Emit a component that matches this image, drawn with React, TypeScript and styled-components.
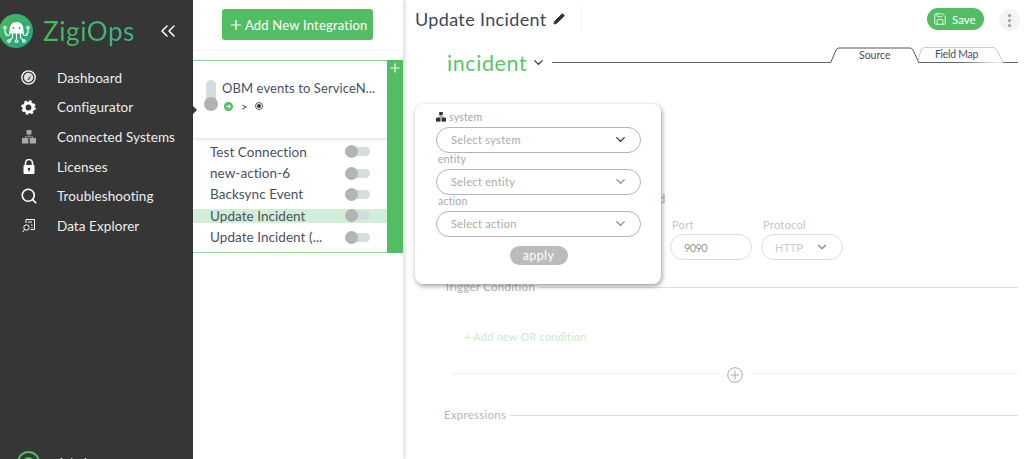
import React from 'react';
import styled, { createGlobalStyle } from 'styled-components';
import { ChevronDown, ChevronsLeft, Pencil, Plus, Save, Search } from 'lucide-react';

const GREEN = '#52bd63';
const FONT = '"Lato", "Noto Sans", sans-serif';

const GlobalStyle = createGlobalStyle`
  html, body {
    margin: 0;
    padding: 0;
    height: 459px;
    overflow: hidden;
    background: #fff;
    font-family: ${FONT};
  }
  * { box-sizing: border-box; }
`;

const Page = styled.div`
  display: flex;
  width: 1024px;
  height: 459px;
  overflow: hidden;
`;

/* sidebar */
const Sidebar = styled.aside`
  position: relative;
  width: 193px;
  height: 459px;
  flex: none;
  background: #363636;
  overflow: hidden;
`;
const Brand = styled.div`
  display: flex;
  align-items: center;
  height: 34px;
  margin-top: 14px;
`;
const BrandName = styled.span`
  margin-left: 10px;
  font-size: 26px;
  letter-spacing: 0.6px;
  font-weight: 400;
  background: linear-gradient(90deg, #4cb85a, #3cb58a);
  -webkit-background-clip: text;
  background-clip: text;
  color: transparent;
`;
const Collapse = styled.span`
  display: flex;
  margin-left: 21px;
  color: #fff;
`;
const Nav = styled.nav`
  display: flex;
  flex-direction: column;
  margin-top: 15px;
`;
const NavItem = styled.div`
  display: flex;
  align-items: center;
  height: 29.6px;
  color: #eee;
  font-size: 13.5px;
  letter-spacing: 0.08px;
`;
const NavIcon = styled.span`
  display: flex;
  justify-content: center;
  width: 57px;
  color: #fff;
`;
const UserRow = styled.div`
  position: absolute;
  left: 17px;
  top: 451px;
  display: flex;
  align-items: flex-start;
  gap: 17px;
  color: #ddd;
  font-size: 13px;
`;
const UserRing = styled.span`
  display: flex;
  justify-content: center;
  padding-top: 4px;
  width: 23px;
  height: 23px;
  border-radius: 50%;
  border: 2px solid ${GREEN};
  &::after {
    content: '';
    width: 11px;
    height: 11px;
    border-radius: 50%;
    background: ${GREEN};
  }
`;
const UserName = styled.span`
  margin-top: 4px;
`;

/* integrations list */
const ListPanel = styled.section`
  position: relative;
  width: 210px;
  height: 459px;
  flex: none;
  background: #fff;
  box-shadow: 2px 0 4px rgba(0, 0, 0, 0.14);
  z-index: 1;
`;
const ButtonBar = styled.div`
  display: flex;
  height: 51px;
  padding: 9px 0 0 29px;
  border-bottom: 1px solid #f4f4f4;
`;
const AddButton = styled.button`
  display: flex;
  align-items: center;
  gap: 1px;
  width: 151px;
  height: 31px;
  padding: 0 0 0 6px;
  border: 0;
  border-radius: 3px;
  background: ${GREEN};
  color: #fff;
  font: 13px ${FONT};
  letter-spacing: 0.2px;
  white-space: nowrap;
  svg { flex: none; }
`;
const Integration = styled.div`
  display: flex;
  height: 193px;
  margin-top: 9px;
  border-top: 1px solid #8fd49a;
  border-bottom: 1px solid #8fd49a;
`;
const IntegrationBody = styled.div`
  width: 194px;
  flex: none;
`;
const PlusRail = styled.div`
  flex: 1;
  display: flex;
  justify-content: center;
  align-items: flex-start;
  padding-top: 1px;
  margin: -1px 0;
  background: ${GREEN};
  color: #fff;
`;
const IntegrationHead = styled.div`
  display: flex;
  height: 77px;
  padding: 18px 0 0 13px;
  background: #fff;
  box-shadow: 0 1px 4px rgba(0, 0, 0, 0.16);
`;
const VerticalToggle = styled.span`
  position: relative;
  display: block;
  width: 10px;
  height: 30px;
  margin-top: 1px;
  flex: none;
  border-radius: 5px;
  background: #d5dcdc;
  &::after {
    content: '';
    position: absolute;
    left: -2px;
    bottom: -1px;
    width: 14px;
    height: 14px;
    border-radius: 50%;
    background: #b3b3b3;
  }
`;
const HeadText = styled.div`
  margin-left: 6px;
  min-width: 0;
`;
const IntegrationTitle = styled.div`
  font-size: 13px;
  line-height: 18px;
  color: #4a5260;
  letter-spacing: 0.1px;
  white-space: nowrap;
`;
const Flow = styled.div`
  display: flex;
  align-items: center;
  gap: 8px;
  margin: 2px 0 0 2px;
  color: #444;
  font-size: 11px;
  height: 14px;
`;
const Actions = styled.ul`
  list-style: none;
  margin: 0;
  padding: 3px 0 0;
`;
const ActionRow = styled.li<{ $active?: boolean }>`
  display: flex;
  align-items: center;
  justify-content: space-between;
  height: 21.35px;
  padding: 0 17px;
  font-size: 13.5px;
  letter-spacing: 0.05px;
  color: #4a5260;
  background: linear-gradient(
    ${(p) => (p.$active ? '#d3eed8, #d3eed8' : '#fff, #fff')}
  ) center / 100% 14px no-repeat;
`;
const Toggle = styled.span`
  position: relative;
  display: block;
  width: 25px;
  height: 9px;
  border-radius: 5px;
  background: #d5dcdc;
  &::before {
    content: '';
    position: absolute;
    left: 0;
    top: -2px;
    width: 13px;
    height: 13px;
    border-radius: 50%;
    background: #b3b3b3;
  }
`;
const Notch = styled.span`
  position: absolute;
  left: 0;
  top: 106px;
  border-left: 4px solid #363636;
  border-top: 4px solid transparent;
  border-bottom: 4px solid transparent;
`;

/* main area */
const Main = styled.main`
  position: relative;
  flex: 1;
  height: 459px;
  overflow: hidden;
  background: #fff;
`;
const TitleBar = styled.header`
  display: flex;
  align-items: center;
  height: 38px;
  padding: 0 4px 0 12px;
`;
const PageTitle = styled.h1`
  display: flex;
  align-items: center;
  gap: 6px;
  width: 167px;
  height: 26px;
  margin: 0;
  border-right: 1px solid #f6f6f6;
  font-size: 18px;
  font-weight: 400;
  letter-spacing: 0.35px;
  color: #3f4757;
`;
const SaveButton = styled.button`
  display: flex;
  align-items: center;
  gap: 5px;
  width: 57px;
  height: 22px;
  margin-left: auto;
  padding: 0 0 0 6px;
  border: 0;
  border-radius: 11px;
  background: ${GREEN};
  color: #fff;
  font: 11.5px ${FONT};
`;
const Kebab = styled.span`
  display: flex;
  flex-direction: column;
  align-items: center;
  justify-content: center;
  gap: 2px;
  width: 21px;
  height: 22px;
  margin: 2px 0 0 15px;
  border-radius: 50%;
  background: #f3f3f3;
  i {
    width: 3px;
    height: 3px;
    border-radius: 50%;
    background: #999;
  }
`;
const EntityRow = styled.div`
  display: flex;
  align-items: flex-start;
  height: 36px;
  margin-top: -1px;
  padding: 0 6px 0 44px;
`;
const EntityName = styled.span`
  margin: 13px 4px 0 0;
  font-size: 21.5px;
  line-height: 26px;
  letter-spacing: 0.6px;
  color: #5cc46b;
`;
const EntityChevron = styled.span`
  display: flex;
  margin-top: 18px;
  color: #333;
`;
const EntityLine = styled.span`
  flex: 1;
  height: 1px;
  margin: 25px 0 0 6px;
  background: #666;
`;
const Tabs = styled.div`
  display: flex;
  width: 188px;
  height: 16px;
  margin-top: 10px;
  border-bottom: 1px solid #666;
`;
const Tab = styled.svg<{ $overlap?: boolean }>`
  flex: none;
  overflow: visible;
  margin-left: ${(p) => (p.$overlap ? '-3px' : '0')};
`;
const TabLabel = styled.text<{ $tight?: boolean }>`
  font-family: ${FONT};
  font-size: 10.5px;
  letter-spacing: ${(p) => (p.$tight ? '-0.3px' : '0')};
  fill: #4a4f57;
`;

const FormRow = styled.div`
  display: flex;
  gap: 9px;
  margin: 145px 0 0 267px;
`;
const Field = styled.div`
  display: flex;
  flex-direction: column;
  gap: 2px;
`;
const FieldLabel = styled.label`
  padding-left: 2px;
  font-size: 11px;
  line-height: 14px;
  letter-spacing: 0.3px;
  color: #c4c4c4;
`;
const FieldBox = styled.div<{ $w: number; $muted?: boolean }>`
  display: flex;
  align-items: center;
  justify-content: space-between;
  width: ${(p) => p.$w}px;
  height: 26px;
  padding: 0 13px;
  border: 1px solid #dcdcdc;
  border-radius: 13px;
  font-size: 11px;
  letter-spacing: ${(p) => (p.$muted ? '0' : '-0.6px')};
  color: ${(p) => (p.$muted ? '#ccc' : '#999')};
`;
const HiddenLabel = styled.span`
  position: absolute;
  left: 216px;
  top: 192px;
  font-size: 11px;
  color: #aaa;
`;
const Section = styled.div<{ $top: number; $left: number }>`
  display: flex;
  align-items: center;
  gap: 4px;
  height: 16px;
  margin: ${(p) => p.$top}px 6px 0 ${(p) => p.$left}px;
  font-size: 11.5px;
  letter-spacing: 0.25px;
  color: #b5b5b5;
  &::after {
    content: '';
    flex: 1;
    height: 1px;
    margin-top: 2px;
    background: #dedede;
  }
`;
const OrLink = styled.div`
  margin: 36px 0 0 61px;
  height: 16px;
  font-size: 11px;
  letter-spacing: 0.2px;
  color: #c9ecce;
`;
const PlusDivider = styled.div`
  display: flex;
  align-items: center;
  height: 18px;
  margin: 20px 6px 0 49px;
  color: #aaa;
  &::before,
  &::after {
    content: '';
    height: 1px;
    margin-top: -3px;
    background: #f2f2f2;
  }
  &::before { width: 268px; margin-right: 7px; }
  &::after { flex: 1; margin-left: 8px; }
`;

/* popover */
const Popover = styled.div`
  position: absolute;
  left: 12px;
  top: 104px;
  width: 246px;
  height: 180px;
  padding: 7px 20px 0 21px;
  border-radius: 8px;
  background: #fff;
  box-shadow: 1px 2px 5px rgba(0, 0, 0, 0.4);
  z-index: 3;
`;
const PopLabel = styled.div`
  display: flex;
  align-items: center;
  gap: 3px;
  height: 12px;
  padding-left: 2px;
  font-size: 10.5px;
  line-height: 12px;
  letter-spacing: 0.2px;
  color: #a8a8a8;
  svg { margin-left: -2px; }
`;
const PopSelect = styled.div<{ $dark?: boolean }>`
  display: flex;
  align-items: center;
  justify-content: space-between;
  height: 26px;
  margin: 4px 0 0;
  padding: 0 12px 2px 14px;
  border: 1px solid #b5b5b5;
  border-radius: 13px;
  font-size: 11px;
  letter-spacing: 0.3px;
  color: #aaa;
  svg { color: ${(p) => (p.$dark ? '#333' : '#888')}; }
`;
const ApplyRow = styled.div`
  display: flex;
  justify-content: center;
  margin-top: 9px;
`;
const ApplyButton = styled.button`
  width: 58px;
  height: 19px;
  padding: 0;
  border: 0;
  border-radius: 10px;
  background: #bbb;
  color: #fff;
  font: 12.5px ${FONT};
  letter-spacing: 0.4px;
`;

const LogoMark = () => (
  <svg width="33" height="34" viewBox="0 0 33 34">
    <defs>
      <linearGradient id="logoFill" x1="0" y1="0" x2="1" y2="1">
        <stop offset="0" stopColor="#4dbb5c" />
        <stop offset="1" stopColor="#1f9e88" />
      </linearGradient>
    </defs>
    <circle cx="16" cy="17" r="17" fill="url(#logoFill)" />
    <path d="M9.500 17c0-6 2.500-9 7-9s7 3 7 9v2.500h-14z" fill="#fff" />
    <g fill="none" stroke="#fff" strokeWidth="1.100" strokeLinecap="round">
      <path d="M10 18c0 4-2 4-4 3" />
      <path d="M12.500 19.500v4l-2.500 2.500" />
      <path d="M16.500 19.500v6" />
      <path d="M20.500 19.500v4l2.500 2.500" />
      <path d="M23 18c0 4 2 4 4 3" />
      <circle cx="5" cy="13.500" r="1.200" />
      <circle cx="28" cy="13.500" r="1.200" />
      <circle cx="9" cy="27" r="1.300" />
      <circle cx="16.500" cy="27" r="1.300" />
      <circle cx="24" cy="27" r="1.300" />
      <path d="M5 15v3c0 1.500 1 2 2 2M28 15v3c0 1.500-1 2-2 2" />
    </g>
    <circle cx="13.500" cy="14" r="1" fill="#3aae74" />
    <circle cx="19.500" cy="14" r="1" fill="#3aae74" />
  </svg>
);

const GaugeIcon = () => (
  <svg width="15" height="15" viewBox="0 0 15 15">
    <circle cx="7.500" cy="7.500" r="6.700" fill="none" stroke="#fff" strokeWidth="1.300" />
    <circle cx="7.500" cy="7.500" r="4.700" fill="#ddd" />
    <path d="M6.500 9.500L10.500 4.500 8 10z" fill="#333" />
  </svg>
);

const GearIcon = () => (
  <svg width="15" height="15" viewBox="0 0 15 15">
    <circle cx="7.500" cy="7.500" r="4.500" fill="none" stroke="#fff" strokeWidth="3.200" />
    <circle cx="7.500" cy="7.500" r="6.500" fill="none" stroke="#fff" strokeWidth="1.600" strokeDasharray="2.500 2.600" />
  </svg>
);

const SystemsIcon = ({ size = 14, color = '#a9a9a9' }: { size?: number; color?: string }) => (
  <svg width={size} height={size} viewBox="0 0 14 14" fill={color}>
    <rect x="4.500" y="0" width="5" height="4.500" />
    <rect x="0" y="8" width="6.300" height="5.500" />
    <rect x="7.700" y="8" width="6.300" height="5.500" />
    <path d="M6.600 4.500h.8v2H11v1.500h-.8V7.300H3.800V8H3V6.500h3.600z" />
  </svg>
);

const LockIcon = () => (
  <svg width="12" height="15" viewBox="0 0 12 15">
    <path d="M2.500 6.500V4a3.500 3.500 0 017 0v2.500" fill="none" stroke="#fff" strokeWidth="1.600" />
    <rect x="0.500" y="6" width="11" height="9" rx="1" fill="#fff" />
    <circle cx="6" cy="10" r="1.300" fill="#363636" />
    <rect x="5.500" y="10" width="1" height="2.500" fill="#363636" />
  </svg>
);

const ExplorerIcon = () => (
  <svg width="14" height="15" viewBox="0 0 14 15" fill="none" stroke="#fff" strokeWidth="1">
    <path d="M4 5V1.500h8.500v10H8.500" />
    <path d="M6 4h4M9 7h1.500M9.500 9.500h1" />
    <circle cx="4.500" cy="9.500" r="2.700" />
    <path d="M2.500 11.500L0.700 14" />
  </svg>
);

const FlowStart = () => (
  <svg width="9" height="9" viewBox="0 0 9 9">
    <circle cx="4.500" cy="4.500" r="4.500" fill={GREEN} />
    <path d="M2 4.500h4M4.500 2.800l1.800 1.700-1.800 1.700" fill="none" stroke="#fff" strokeWidth="1.200" />
  </svg>
);

const FlowEnd = () => (
  <svg width="8" height="8" viewBox="0 0 8 8">
    <circle cx="4" cy="4" r="3.500" fill="none" stroke="#333" strokeWidth="0.800" />
    <circle cx="4" cy="4" r="2" fill="#333" />
  </svg>
);

const SourceTab = () => (
  <Tab width="90" height="16" viewBox="0 0 90 16">
    <path d="M0.500 16L6 3Q7 1 9 1H80Q82 1 83 3L89 16" fill="#fff" stroke="#555" />
    <TabLabel x="29" y="12">Source</TabLabel>
  </Tab>
);

const FieldMapTab = () => (
  <Tab $overlap width="87" height="16" viewBox="0 0 87 16">
    <path d="M1 14L4 3Q5 .5 8 .5H76Q78 .5 80 3L86 16" fill="#fff" stroke="#ccc" />
    <TabLabel $tight x="18" y="11">Field Map</TabLabel>
  </Tab>
);

const navItems: { label: string; icon: React.ReactNode }[] = [
  { label: 'Dashboard', icon: <GaugeIcon /> },
  { label: 'Configurator', icon: <GearIcon /> },
  { label: 'Connected Systems', icon: <SystemsIcon /> },
  { label: 'Licenses', icon: <LockIcon /> },
  { label: 'Troubleshooting', icon: <Search size={18} strokeWidth={2.2} /> },
  { label: 'Data Explorer', icon: <ExplorerIcon /> },
];

const actions = ['Test Connection', 'new-action-6', 'Backsync Event', 'Update Incident', 'Update Incident (...'];

export default function App() {
  return (
    <Page>
      <GlobalStyle />
      <Sidebar>
        <Brand>
          <LogoMark />
          <BrandName>ZigiOps</BrandName>
          <Collapse>
            <ChevronsLeft size={24} strokeWidth={1.5} />
          </Collapse>
        </Brand>
        <Nav>
          {navItems.map((item) => (
            <NavItem key={item.label}>
              <NavIcon>{item.icon}</NavIcon>
              {item.label}
            </NavItem>
          ))}
        </Nav>
        <UserRow>
          <UserRing />
          <UserName>Admin</UserName>
        </UserRow>
      </Sidebar>

      <ListPanel>
        <ButtonBar>
          <AddButton>
            <Plus size={16} strokeWidth={1.8} />
            Add New Integration
          </AddButton>
        </ButtonBar>
        <Integration>
          <IntegrationBody>
            <IntegrationHead>
              <VerticalToggle />
              <HeadText>
                <IntegrationTitle>OBM events to ServiceN...</IntegrationTitle>
                <Flow>
                  <FlowStart />
                  <span>&gt;</span>
                  <FlowEnd />
                </Flow>
              </HeadText>
            </IntegrationHead>
            <Actions>
              {actions.map((name) => (
                <ActionRow key={name} $active={name === 'Update Incident'}>
                  {name}
                  <Toggle />
                </ActionRow>
              ))}
            </Actions>
          </IntegrationBody>
          <PlusRail>
            <Plus size={14} strokeWidth={2} />
          </PlusRail>
        </Integration>
        <Notch />
      </ListPanel>

      <Main>
        <TitleBar>
          <PageTitle>
            Update Incident
            <Pencil size={12} fill="#333" color="#333" />
          </PageTitle>
          <SaveButton>
            <Save size={14} strokeWidth={1.4} />
            Save
          </SaveButton>
          <Kebab>
            <i />
            <i />
            <i />
          </Kebab>
        </TitleBar>
        <EntityRow>
          <EntityName>incident</EntityName>
          <EntityChevron>
            <ChevronDown size={15} strokeWidth={2} />
          </EntityChevron>
          <EntityLine />
          <Tabs>
            <SourceTab />
            <FieldMapTab />
          </Tabs>
        </EntityRow>

        <HiddenLabel>Password</HiddenLabel>
        <FormRow>
          <Field>
            <FieldLabel>Port</FieldLabel>
            <FieldBox $w={82}>9090</FieldBox>
          </Field>
          <Field>
            <FieldLabel>Protocol</FieldLabel>
            <FieldBox $w={82} $muted>
              HTTP
              <ChevronDown size={14} color="#888" />
            </FieldBox>
          </Field>
        </FormRow>
        <Section $top={18} $left={41}>Trigger Condition</Section>
        <OrLink>+ Add new OR condition</OrLink>
        <PlusDivider>
          <svg width="16" height="16" viewBox="0 0 16 16" fill="none" stroke="#aaa">
            <circle cx="8" cy="8" r="7.300" />
            <path d="M8 3.500v9M3.500 8h9" />
          </svg>
        </PlusDivider>
        <Section $top={22} $left={41}>Expressions</Section>

        <Popover>
          <PopLabel>
            <SystemsIcon size={10} color="#333" />
            system
          </PopLabel>
          <PopSelect $dark>
            Select system
            <ChevronDown size={15} strokeWidth={2} />
          </PopSelect>
          <PopLabel>entity</PopLabel>
          <PopSelect>
            Select entity
            <ChevronDown size={15} strokeWidth={2} />
          </PopSelect>
          <PopLabel>action</PopLabel>
          <PopSelect>
            Select action
            <ChevronDown size={15} strokeWidth={2} />
          </PopSelect>
          <ApplyRow>
            <ApplyButton>apply</ApplyButton>
          </ApplyRow>
        </Popover>
      </Main>
    </Page>
  );
}
